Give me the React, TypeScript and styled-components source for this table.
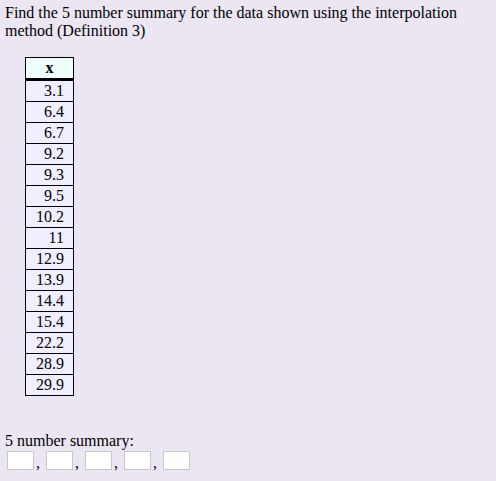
import { Fragment } from "react";
import styled, { createGlobalStyle } from "styled-components";

const GlobalStyle = createGlobalStyle`
  html, body {
    margin: 0;
    padding: 0;
    background: #ebe6f2;
  }
`;

const Page = styled.div`
  width: 496px;
  height: 481px;
  box-sizing: border-box;
  padding: 4px 5px;
  background: #ebe6f2;
  font-family: "Liberation Serif", "Times New Roman", serif;
  font-size: 16px;
  line-height: 18px;
  color: #000;
`;

const Question = styled.p`
  margin: 0;
`;

const DataTable = styled.table`
  margin: 17px 0 0 20px;
  border-collapse: collapse;
  width: 49px;
`;

const HeadCell = styled.th`
  background: #effffb;
  border: 1px solid #000;
  border-bottom: 3px solid #000;
  height: 20px;
  padding: 0;
  font-weight: bold;
  text-align: center;
`;

const Cell = styled.td`
  background: #f0eeff;
  border: 1px solid #000;
  height: 20px;
  padding: 0 9px 0 10px;
  text-align: right;
`;

const SummaryLabel = styled.p`
  margin: 36px 0 0 0;
`;

const InputRow = styled.div`
  display: flex;
  align-items: flex-end;
  margin: 1px 0 0 2px;
`;

const Blank = styled.input`
  box-sizing: border-box;
  width: 27px;
  height: 19px;
  margin: 0;
  padding: 0;
  border: 1px solid #c8c8c8;
  background: #fff;
  outline: none;
`;

const Comma = styled.span`
  width: 12px;
  padding-left: 2px;
  box-sizing: border-box;
  line-height: 14px;
`;

const DATA = ["3.1", "6.4", "6.7", "9.2", "9.3", "9.5", "10.2", "11", "12.9", "13.9", "14.4", "15.4", "22.2", "28.9", "29.9"];

const App = () => {
  return (
    <Page>
      <GlobalStyle />
      <Question>
        Find the 5 number summary for the data shown using the interpolation method (Definition 3)
      </Question>
      <DataTable>
        <thead>
          <tr>
            <HeadCell>x</HeadCell>
          </tr>
        </thead>
        <tbody>
          {DATA.map((value, i) => (
            <tr key={i}>
              <Cell>{value}</Cell>
            </tr>
          ))}
        </tbody>
      </DataTable>
      <SummaryLabel>5 number summary:</SummaryLabel>
      <InputRow>
        {[0, 1, 2, 3, 4].map((i) => (
          <Fragment key={i}>
            <Blank type="text" />
            {i < 4 && <Comma>,</Comma>}
          </Fragment>
        ))}
      </InputRow>
    </Page>
  );
};

export default App;
